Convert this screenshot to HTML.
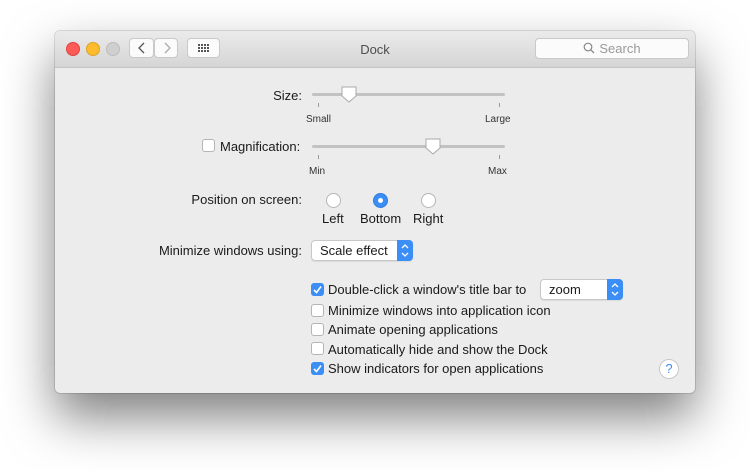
<!DOCTYPE html>
<html><head><style>
body{margin:0;width:750px;height:470px;background:#fff;position:relative;overflow:hidden;font-family:"Liberation Sans",sans-serif;font-size:13px;color:#1a1a1a}
.a{position:absolute}
.win{left:55px;top:31px;width:640px;height:362px;background:#ececec;border-radius:5px;box-shadow:0 24px 50px rgba(0,0,0,.5),0 0 0 1px rgba(0,0,0,.12)}
.tb{left:0;top:0;width:640px;height:36px;background:linear-gradient(#ebebeb,#d5d5d5);border-bottom:1px solid #c4c4c4;border-radius:5px 5px 0 0}
.dot{width:12px;height:12px;border-radius:50%;top:11px}
.btn{background:#fbfbfb;border:1px solid #c9c9c9;border-radius:4px;height:20px;top:7px;box-sizing:border-box}
.r{text-align:right}
.track{height:3px;background:#c2c2c2;border-radius:2px}
.tick{width:1px;height:4px;background:#999}
.sm{font-size:10px;color:#333}
.cb{width:13px;height:13px;border:1px solid #b5b5b5;border-radius:3px;background:#fff;box-sizing:border-box}
.cbk{width:13px;height:13px;border-radius:3px;background:#3b8ef5;box-sizing:border-box}
.rad{width:15px;height:15px;border-radius:50%;border:1px solid #b5b5b5;background:#fff;box-sizing:border-box}
.pop{background:#fff;border:1px solid #c8c8c8;border-radius:4px;height:21px;box-sizing:border-box;box-shadow:0 1px 1px rgba(0,0,0,.08)}
.arr{background:#3b8ef5;border-radius:0 4px 4px 0;width:16px;height:21px;top:-1px;right:-1px}
</style></head><body>
<div class="a win">
 <div class="a tb">
  <div class="a dot" style="left:11px;background:#fc5b57;border:.5px solid #e0443e"></div>
  <div class="a dot" style="left:31px;background:#fdbb2e;border:.5px solid #dea123"></div>
  <div class="a dot" style="left:51px;background:#cfcfcf;border:.5px solid #bcbcbc"></div>
  <div class="a btn" style="left:74px;width:25px"><svg width="25" height="20" class="a" style="left:0;top:-1px"><path d="M14 5l-5 5 5 5" fill="none" stroke="#555" stroke-width="1.3"/></svg></div>
  <div class="a btn" style="left:99px;width:24px"><svg width="24" height="20" class="a" style="left:0;top:-1px"><path d="M10 5l5 5-5 5" fill="none" stroke="#aaa" stroke-width="1.3"/></svg></div>
  <div class="a btn" style="left:132px;width:33px"><svg width="33" height="20" class="a" style="left:0;top:-1px" fill="#555"><g><rect x="10" y="6" width="2" height="2"/><rect x="13" y="6" width="2" height="2"/><rect x="16" y="6" width="2" height="2"/><rect x="19" y="6" width="2" height="2"/><rect x="10" y="9" width="2" height="2"/><rect x="13" y="9" width="2" height="2"/><rect x="16" y="9" width="2" height="2"/><rect x="19" y="9" width="2" height="2"/><rect x="10" y="12" width="2" height="2"/><rect x="13" y="12" width="2" height="2"/><rect x="16" y="12" width="2" height="2"/><rect x="19" y="12" width="2" height="2"/></g></svg></div>
  <div class="a" style="left:0;width:640px;top:11px;text-align:center;color:#4d4d4d">Dock</div>
  <div class="a btn" style="left:480px;width:154px;top:7px;height:21px;color:#999;text-align:center;line-height:19px">
   <svg width="12" height="12" style="vertical-align:-1px;margin-right:4px"><circle cx="5" cy="5" r="3.8" fill="none" stroke="#888" stroke-width="1.2"/><path d="M7.8 7.8L11 11" stroke="#888" stroke-width="1.3"/></svg>Search</div>
 </div>
</div>
<div class="a r" style="left:200px;width:102px;top:88px">Size:</div>
<div class="a track" style="left:312px;top:93px;width:193px"></div>
<svg class="a" style="left:340px;top:86px" width="18" height="18"><path d="M2 1h14v9l-7 6-7-6z" fill="#fff" stroke="#aaa"/></svg>
<div class="a tick" style="left:318px;top:103px"></div>
<div class="a tick" style="left:499px;top:103px"></div>
<div class="a sm" style="left:306px;top:114px">Small</div>
<div class="a sm" style="left:485px;top:114px">Large</div>
<div class="a cb" style="left:202px;top:139px"></div>
<div class="a" style="left:220px;top:139px">Magnification:</div>
<div class="a track" style="left:312px;top:145px;width:193px"></div>
<svg class="a" style="left:424px;top:138px" width="18" height="18"><path d="M2 1h14v9l-7 6-7-6z" fill="#fff" stroke="#aaa"/></svg>
<div class="a tick" style="left:318px;top:155px"></div>
<div class="a tick" style="left:499px;top:155px"></div>
<div class="a sm" style="left:309px;top:166px">Min</div>
<div class="a sm" style="left:488px;top:166px">Max</div>
<div class="a r" style="left:100px;width:202px;top:192px">Position on screen:</div>
<div class="a rad" style="left:326px;top:193px"></div>
<div class="a rad" style="left:373px;top:193px;background:#3b8ef5;border-color:#2f7de0"><div class="a" style="left:4px;top:4px;width:5px;height:5px;border-radius:50%;background:#fff"></div></div>
<div class="a rad" style="left:421px;top:193px"></div>
<div class="a" style="left:322px;top:211px">Left</div>
<div class="a" style="left:360px;top:211px">Bottom</div>
<div class="a" style="left:413px;top:211px">Right</div>
<div class="a r" style="left:100px;width:202px;top:243px">Minimize windows using:</div>
<div class="a pop" style="left:311px;top:240px;width:102px"><span class="a" style="left:8px;top:2px">Scale effect</span><div class="a arr"><svg width="16" height="21"><path d="M5 8l3-3 3 3M5 13l3 3 3-3" fill="none" stroke="#fff" stroke-width="1.3"/></svg></div></div>
<div class="a cbk" style="left:311px;top:283px"><svg width="13" height="13"><path d="M3 7l2.5 2.5L10 3.5" fill="none" stroke="#fff" stroke-width="1.6"/></svg></div>
<div class="a" style="left:328px;top:282px">Double-click a window's title bar to</div>
<div class="a pop" style="left:540px;top:279px;width:83px"><span class="a" style="left:8px;top:2px">zoom</span><div class="a arr"><svg width="16" height="21"><path d="M5 8l3-3 3 3M5 13l3 3 3-3" fill="none" stroke="#fff" stroke-width="1.3"/></svg></div></div>
<div class="a cb" style="left:311px;top:304px"></div>
<div class="a" style="left:328px;top:303px">Minimize windows into application icon</div>
<div class="a cb" style="left:311px;top:323px"></div>
<div class="a" style="left:328px;top:322px">Animate opening applications</div>
<div class="a cb" style="left:311px;top:342px"></div>
<div class="a" style="left:328px;top:342px">Automatically hide and show the Dock</div>
<div class="a cbk" style="left:311px;top:362px"><svg width="13" height="13"><path d="M3 7l2.5 2.5L10 3.5" fill="none" stroke="#fff" stroke-width="1.6"/></svg></div>
<div class="a" style="left:328px;top:361px">Show indicators for open applications</div>
<div class="a" style="left:659px;top:359px;width:20px;height:20px;border-radius:50%;background:#fff;border:1px solid #c8c8c8;box-sizing:border-box;text-align:center;color:#3b8ef5;line-height:18px;font-size:13px">?</div>
</body></html>
